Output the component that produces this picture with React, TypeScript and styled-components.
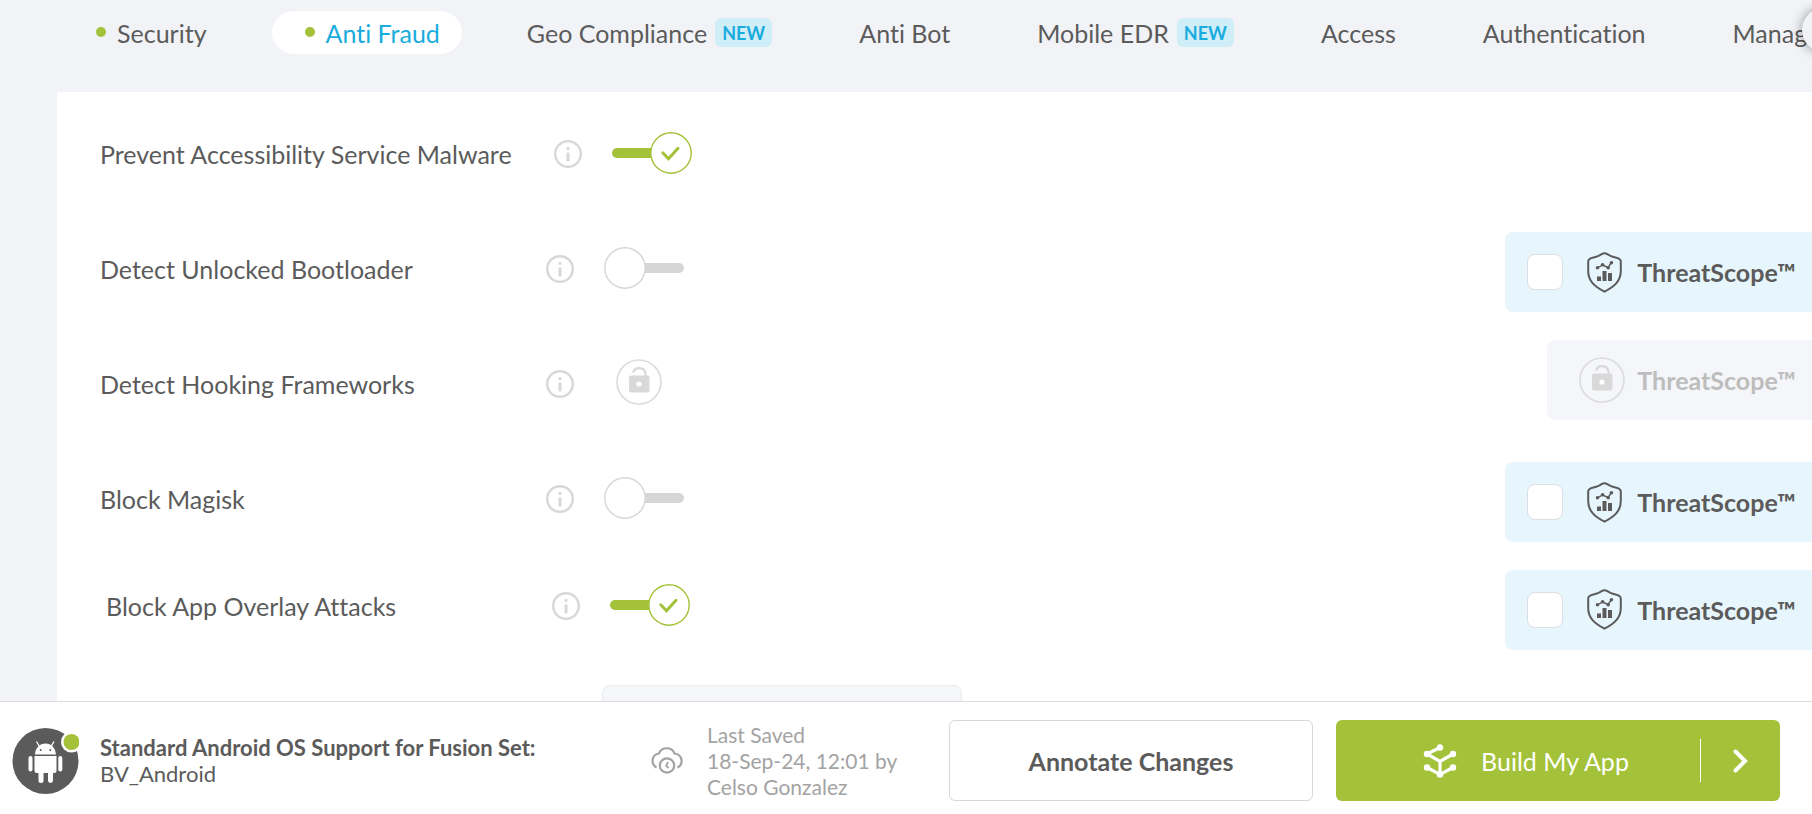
import React, { useState } from "react";
import styled, { createGlobalStyle, css } from "styled-components";

const GlobalStyle = createGlobalStyle`
  * { box-sizing: border-box; }
  html, body, #root { height: 100%; }
  body {
    margin: 0;
    background: #f1f3f7;
    color: #5b5b5b;
    font-family: Lato, "Liberation Sans", sans-serif;
    font-size: 25px;
    font-variant-ligatures: none;
    line-height: 32px;
    overflow: hidden;
  }
  button, input { font: inherit; color: inherit; }
`;

const GREEN = "#a3c239";
const BLUE = "#19acdc";

const Page = styled.div`
  display: flex;
  flex-direction: column;
  height: 100%;
`;

const NavBar = styled.nav`
  position: relative;
  flex: none;
  display: flex;
  gap: 43px;
  padding: 11px 0 38px 63px;
  overflow: hidden;
`;

const NavTab = styled.a<{ $active?: boolean; $dot?: boolean }>`
  flex: none;
  display: flex;
  align-items: center;
  height: 43px;
  padding: 0 22px 0 ${(p) => (p.$dot ? 33 : 22)}px;
  border-radius: 22px;
  white-space: nowrap;
  text-decoration: none;
  color: ${(p) => (p.$active ? BLUE : "inherit")};
  background: ${(p) => (p.$active ? "#fff" : "transparent")};
`;

const Dot = styled.span`
  width: 10px;
  height: 10px;
  margin: 0 11px 2px 0;
  border-radius: 50%;
  background: ${GREEN};
`;

const NewBadge = styled.span`
  height: 29px;
  margin-left: 8px;
  padding: 0 7px;
  border-radius: 6px;
  background: #d0eef8;
  color: ${BLUE};
  font-size: 18px;
  font-weight: 700;
  line-height: 30px;
`;

const ScrollButton = styled.button`
  position: absolute;
  top: 8px;
  right: -34px;
  width: 44px;
  height: 44px;
  border: 0;
  border-radius: 50%;
  background: #f1f3f7;
  box-shadow: 0 0 12px rgba(0, 0, 0, 0.4);
`;

const Card = styled.main`
  flex: 1;
  min-height: 0;
  margin-left: 57px;
  padding: 4px 0 0 43px;
  overflow: hidden;
  background: #fff;
`;

const FeatureRow = styled.div<{ $nested?: boolean }>`
  display: flex;
  align-items: center;
  height: ${(p) => (p.$nested ? 100 : 115)}px;
  padding-left: ${(p) => (p.$nested ? 6 : 0)}px;
`;

const FeatureLabel = styled.label<{ $wide?: boolean }>`
  flex: none;
  min-width: ${(p) => (p.$wide ? 419 : 411)}px;
  white-space: nowrap;
`;

const InfoButton = styled.button`
  display: flex;
  margin: 0 30px 0 35px;
  padding: 0;
  border: 0;
  background: none;
`;

const ToggleBox = styled.span`
  position: relative;
  display: flex;
  width: 80px;
  height: 42px;
  margin-bottom: 2px;
`;

const ToggleInput = styled.input`
  position: absolute;
  inset: 0;
  width: 100%;
  height: 100%;
  margin: 0;
  opacity: 0;
  cursor: pointer;
`;

const LockSlot = styled.span`
  display: flex;
  margin: 0 0 4px 12px;
`;

const Scope = styled.div<{ $locked?: boolean }>`
  display: flex;
  align-items: center;
  height: 80px;
  margin-left: auto;
  padding: 0 16px 0 22px;
  border-radius: 8px 0 0 8px;
  background: #e7f6fc;
  font-weight: 700;
  margin-top: 7px;
  ${(p) =>
    p.$locked &&
    css`
      margin-top: 0;
      margin-bottom: 8px;
      padding-left: 32px;
      background: #f5f6f9;
      color: #bdbdbd;
    `}
`;

const ScopeLabel = styled.label`
  display: flex;
  align-items: center;
`;

const ScopeName = styled.span<{ $locked?: boolean }>`
  margin-left: ${(p) => (p.$locked ? 12 : 15)}px;
`;

const Checkbox = styled.input`
  appearance: none;
  width: 36px;
  height: 36px;
  margin: 0 24px 0 0;
  border: 1px solid #dcdfe1;
  border-radius: 8px;
  background: #fff;
  &:checked {
    background: ${GREEN};
  }
`;

const NextPanel = styled.div`
  width: 360px;
  height: 80px;
  margin: 29px 0 0 502px;
  border: 1px solid #e8edf0;
  border-radius: 8px;
  background: #f5f6f9;
`;

const Footer = styled.footer`
  flex: none;
  display: flex;
  align-items: center;
  padding: 18px 32px 13px 12px;
  border-top: 1px solid #dcdcdc;
  background: #fff;
  font-size: 22px;
  line-height: 26px;
`;

const FusionSet = styled.div`
  flex: 1;
  margin-left: 21px;
`;

const SavedText = styled.p`
  width: 200px;
  margin: 0 42px 0 24px;
  color: #a3a3a3;
  font-size: 21px;
`;

const FooterButton = styled.button<{ $primary?: boolean }>`
  flex: none;
  display: flex;
  align-items: center;
  justify-content: center;
  width: ${(p) => (p.$primary ? 444 : 364)}px;
  height: 81px;
  padding: 0;
  border: ${(p) => (p.$primary ? "0" : "1px solid #d8d8d8")};
  border-radius: 6px;
  background: ${(p) => (p.$primary ? GREEN : "#fff")};
  color: ${(p) => (p.$primary ? "#fff" : "inherit")};
  font-size: 25px;
  font-weight: ${(p) => (p.$primary ? 400 : 700)};
  & + & {
    margin-left: 23px;
  }
`;

const BuildLabel = styled.span`
  flex: 1;
  display: flex;
  align-items: center;
  justify-content: center;
  gap: 24px;
  padding-left: 16px;
`;

const BuildArrow = styled.span`
  display: flex;
  align-items: center;
  justify-content: center;
  width: 80px;
  height: 43px;
  border-left: 1px solid #fff;
`;

const InfoIcon = () => (
  <svg width="28" height="28" viewBox="0 0 28 28" aria-hidden="true">
    <circle cx="14" cy="14" r="12.8" fill="none" stroke="#d8d8d8" strokeWidth="2.4" />
    <rect x="12.5" y="7" width="3" height="3" rx="1" fill="#d8d8d8" />
    <rect x="12.5" y="12.5" width="3" height="9" rx="0.8" fill="#d8d8d8" />
  </svg>
);

const ToggleArt = ({ on }: { on: boolean }) =>
  on ? (
    <svg width="80" height="42" viewBox="0 0 80 42" aria-hidden="true">
      <rect x="0" y="16" width="50" height="10" rx="5" fill={GREEN} />
      <circle cx="59" cy="21" r="20.2" fill="#fff" stroke={GREEN} strokeWidth="1.4" />
      <path d="M50.8 20.8l5.700 6 9.500-10.500" fill="none" stroke={GREEN} strokeWidth="3" strokeLinecap="round" />
    </svg>
  ) : (
    <svg width="80" height="42" viewBox="0 0 80 42" aria-hidden="true">
      <rect x="30" y="16" width="50" height="10" rx="5" fill="#d6d6d6" />
      <circle cx="21" cy="21" r="20.2" fill="#fff" stroke="#d6d6d6" strokeWidth="1.4" />
    </svg>
  );

const LockIcon = () => (
  <svg width="46" height="46" viewBox="0 0 46 46" role="img" aria-label="Locked">
    <circle cx="23" cy="23" r="22" fill="none" stroke="#dcdcdc" strokeWidth="1.7" />
    <rect x="13" y="16.5" width="20.5" height="17" rx="2" fill="#d9d9d9" />
    <path d="M17 13.500a6.500 6.500 0 0 1 12.600 1.500v3" fill="none" stroke="#d9d9d9" strokeWidth="2.3" />
    <circle cx="23" cy="25" r="2.6" fill="#fff" />
  </svg>
);

const ShieldIcon = () => (
  <svg width="35" height="41" viewBox="0 0 35 41" aria-hidden="true" fill="#5b5b5b">
    <path
      d="M17.5 1.2C19.5 1.2 20.5 2.6 24 4.2C28.5 6.2 33.8 5.2 33.8 9.5V19C33.8 29 27.5 34.5 17.5 39.7C7.5 34.5 1.2 29 1.2 19V9.5C1.2 5.2 6.5 6.2 11 4.2C14.5 2.6 15.5 1.2 17.5 1.2Z"
      fill="none"
      stroke="#5b5b5b"
      strokeWidth="2"
    />
    <path d="M10.5 15.8L15.6 13L21 15.5L24.2 11" fill="none" stroke="#5b5b5b" strokeWidth="1.4" />
    <circle cx="10.5" cy="15.8" r="1.8" />
    <circle cx="15.6" cy="12.8" r="1.8" />
    <circle cx="21.2" cy="15.8" r="1.8" />
    <circle cx="24.4" cy="10.8" r="1.8" />
    <rect x="10" y="24.5" width="4" height="4.5" />
    <rect x="15.5" y="19" width="4" height="10" />
    <rect x="21" y="21" width="4" height="8" />
  </svg>
);

const AndroidIcon = () => (
  <svg width="67" height="66" viewBox="0 0 67 66" role="img" aria-label="Android">
    <circle cx="33.5" cy="33" r="33" fill="#5b5b5b" />
    <g fill="#fff">
      <path d="M23 26.5a10.5 11 0 0 1 21 0Z" />
      <path d="M24.5 13.5l3 5M42 13.5l-3 5" stroke="#fff" strokeWidth="1.3" />
      <path d="M22.5 28h22v14.500a2.500 2.500 0 0 1-2.500 2.500h-1v7.500a2.500 2.500 0 0 1-5 0V45h-4.500v7.500a2.500 2.500 0 0 1-5 0V45h-1.500a2.500 2.500 0 0 1-2.500-2.500Z" />
      <rect x="16.5" y="28" width="4" height="15.5" rx="2" />
      <rect x="46.3" y="28" width="4" height="15.5" rx="2" />
    </g>
    <circle cx="28.7" cy="22" r="1" fill="#5b5b5b" />
    <circle cx="38.3" cy="22" r="1" fill="#5b5b5b" />
    <circle cx="59.5" cy="14" r="10.5" fill="#fff" />
    <circle cx="59.5" cy="14" r="8" fill={GREEN} />
  </svg>
);

const CloudIcon = () => (
  <svg width="32" height="27" viewBox="0 0 32 27" aria-hidden="true" fill="none" stroke="#a3a3a3" strokeWidth="2.2">
    <path d="M5.5 20.5C-0.5 17 0.5 7.5 8 6.5C10.5 -0.5 21 -0.5 23.5 6.5C31.5 7.5 33 17 26.5 20.5" />
    <circle cx="16" cy="18.5" r="7.2" />
    <path d="M17 15l-1.800 3.700L17.500 21" strokeWidth="1.8" />
  </svg>
);

const BuildIcon = () => (
  <svg width="34" height="34" viewBox="0 0 34 34" aria-hidden="true" fill="#fff">
    <path
      d="M17 3.5L4 10L17 17.5L30 10M17 17V30M4 23.500L17 30.500L30 23.500"
      fill="none"
      stroke="#fff"
      strokeWidth="3.2"
    />
    <circle cx="17" cy="3.500" r="3.2" />
    <circle cx="4" cy="10" r="3.2" />
    <circle cx="30" cy="10" r="3.2" />
    <circle cx="4" cy="23.500" r="3.2" />
    <circle cx="30" cy="23.500" r="3.2" />
    <circle cx="17" cy="30.500" r="3.2" />
  </svg>
);

const ChevronIcon = () => (
  <svg width="15" height="24" viewBox="0 0 15 24" aria-hidden="true">
    <path d="M2.5 2.5L12 12L2.5 21.5" fill="none" stroke="#fff" strokeWidth="4" strokeLinecap="round" />
  </svg>
);

const TABS = [
  { name: "Security", dot: true },
  { name: "Anti Fraud", dot: true, active: true },
  { name: "Geo Compliance", isNew: true },
  { name: "Anti Bot" },
  { name: "Mobile EDR", isNew: true },
  { name: "Access" },
  { name: "Authentication" },
  { name: "Manag" },
];

type FeatureData = {
  id: string;
  name: string;
  on?: boolean;
  locked?: boolean;
  scope?: boolean;
  nested?: boolean;
  wide?: boolean;
};

const FEATURES: FeatureData[] = [
  { id: "accessibility", name: "Prevent Accessibility Service Malware", on: true, wide: true },
  { id: "bootloader", name: "Detect Unlocked Bootloader", scope: true },
  { id: "hooking", name: "Detect Hooking Frameworks", locked: true, scope: true },
  { id: "magisk", name: "Block Magisk", scope: true },
  { id: "overlay", name: "Block App Overlay Attacks", on: true, scope: true, nested: true },
];

function Feature({ feature }: { feature: FeatureData }) {
  const [on, setOn] = useState(!!feature.on);
  return (
    <FeatureRow $nested={feature.nested}>
      <FeatureLabel $wide={feature.wide} htmlFor={feature.locked ? undefined : feature.id}>
        {feature.name}
      </FeatureLabel>
      <InfoButton type="button" aria-label={`About ${feature.name}`}>
        <InfoIcon />
      </InfoButton>
      {feature.locked ? (
        <LockSlot>
          <LockIcon />
        </LockSlot>
      ) : (
        <ToggleBox>
          <ToggleArt on={on} />
          <ToggleInput
            id={feature.id}
            type="checkbox"
            role="switch"
            checked={on}
            onChange={(e) => setOn(e.target.checked)}
          />
        </ToggleBox>
      )}
      {feature.scope && (
        <Scope $locked={feature.locked}>
          {feature.locked ? (
            <>
              <LockIcon />
              <ScopeName $locked>ThreatScope™</ScopeName>
            </>
          ) : (
            <ScopeLabel>
              <Checkbox type="checkbox" />
              <ShieldIcon />
              <ScopeName>ThreatScope™</ScopeName>
            </ScopeLabel>
          )}
        </Scope>
      )}
    </FeatureRow>
  );
}

export default function App() {
  return (
    <Page>
      <GlobalStyle />
      <NavBar>
        {TABS.map((tab) => (
          <NavTab
            key={tab.name}
            href="#"
            $active={tab.active}
            $dot={tab.dot}
            aria-current={tab.active ? "page" : undefined}
          >
            {tab.dot && <Dot />}
            {tab.name}
            {tab.isNew && <NewBadge>NEW</NewBadge>}
          </NavTab>
        ))}
        <ScrollButton type="button" aria-label="Scroll tabs" />
      </NavBar>
      <Card>
        {FEATURES.map((feature) => (
          <Feature key={feature.id} feature={feature} />
        ))}
        <NextPanel />
      </Card>
      <Footer>
        <AndroidIcon />
        <FusionSet>
          <strong>Standard Android OS Support for Fusion Set:</strong>
          <br />
          BV_Android
        </FusionSet>
        <CloudIcon />
        <SavedText>
          Last Saved
          <br />
          18-Sep-24, 12:01 by
          <br />
          Celso Gonzalez
        </SavedText>
        <FooterButton type="button">Annotate Changes</FooterButton>
        <FooterButton type="button" $primary>
          <BuildLabel>
            <BuildIcon />
            Build My App
          </BuildLabel>
          <BuildArrow>
            <ChevronIcon />
          </BuildArrow>
        </FooterButton>
      </Footer>
    </Page>
  );
}
